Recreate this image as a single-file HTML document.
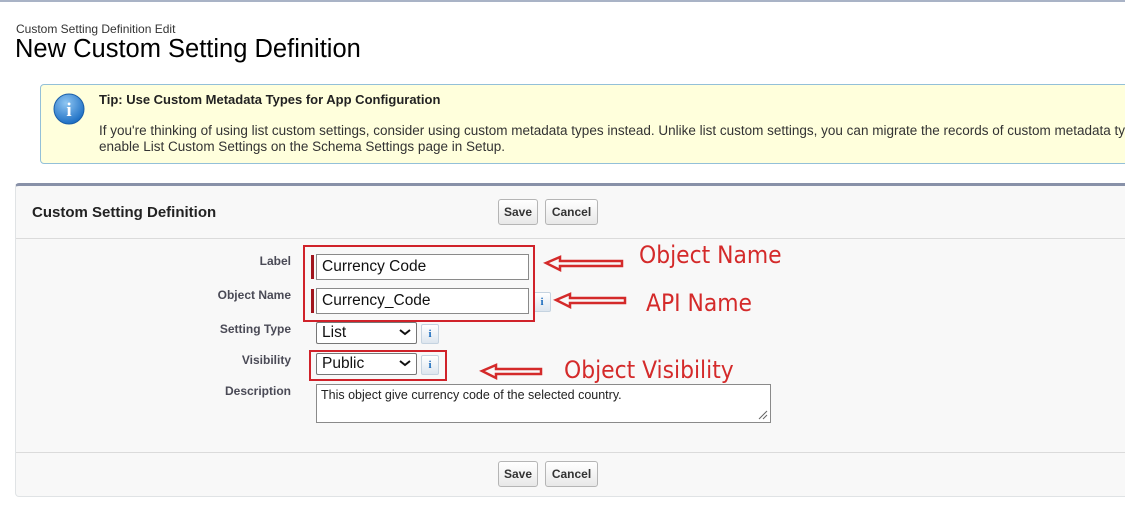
<!DOCTYPE html>
<html><head><style>
body{margin:0;width:1125px;height:511px;background:#fff;font-family:"Liberation Sans",Arial,sans-serif;position:relative;overflow:hidden}
.a{position:absolute}
.btn{position:absolute;height:24px;border:1px solid #b5b5b5;border-radius:3px;background:linear-gradient(#fff,#e8e8e8);font-size:12px;font-weight:bold;color:#333;line-height:24px;text-align:center}
.lbl{position:absolute;right:834px;font-size:12px;font-weight:bold;color:#4a4a56;text-align:right}
.inp{position:absolute;border:1px solid #8a8a8a;background:#fff;font-size:15.5px;color:#111;box-sizing:border-box;padding-left:5px}
.sel{position:absolute;border:1px solid #767676;border-radius:2px;background:#fff;font-size:15.5px;color:#111;box-sizing:border-box;padding-left:5px}
.info{position:absolute;width:16px;height:18px;border:1px solid #c5d3e0;border-radius:2px;background:linear-gradient(#fff,#dde6ef);color:#1a6bbd;font:bold 11px "Liberation Serif",serif;text-align:center;line-height:18px}
.red{position:absolute;border:2px solid #d0222a}
.ann{position:absolute;color:#d42a2a;font-size:24.3px;font-family:"DejaVu Sans Condensed","Liberation Sans",sans-serif}
</style></head><body>
<div class="a" style="left:0;top:0;width:1125px;height:2px;background:#a9b3c6"></div>
<div class="a" style="left:16px;top:22px;font-size:12px;color:#333">Custom Setting Definition Edit</div>
<div class="a" style="left:15px;top:35px;font-size:25.5px;color:#000">New Custom Setting Definition</div>
<div class="a" style="left:40px;top:84px;width:1100px;height:78px;background:#ffffdc;border:1px solid #93c0d8;border-radius:4px"></div>
<svg class="a" style="left:52px;top:92px" width="34" height="34"><defs><radialGradient id="g" cx="40%" cy="30%" r="70%"><stop offset="0" stop-color="#8fc6f2"/><stop offset="1" stop-color="#1d6fc4"/></radialGradient></defs><circle cx="17" cy="17" r="15" fill="url(#g)" stroke="#1a5ea8"/><text x="17" y="24" text-anchor="middle" fill="#fff" font-family="Liberation Serif" font-weight="bold" font-size="19">i</text></svg>
<div class="a" style="left:99px;top:92px;font-size:13px;font-weight:bold;color:#222">Tip: Use Custom Metadata Types for App Configuration</div>
<div class="a" style="left:99px;top:123px;font-size:13.5px;color:#333;line-height:16px;white-space:nowrap">If you're thinking of using list custom settings, consider using custom metadata types instead. Unlike list custom settings, you can migrate the records of custom metadata types<br>enable List Custom Settings on the Schema Settings page in Setup.</div>
<div class="a" style="left:15px;top:183px;width:1120px;height:310px;background:#f8f8f8;border:1px solid #e0e3e5;border-top:3px solid #8891a8;border-radius:4px 0 0 4px"></div>
<div class="a" style="left:16px;top:238px;width:1120px;height:1px;background:#dbdbdb"></div>
<div class="a" style="left:16px;top:452px;width:1120px;height:1px;background:#dbdbdb"></div>
<div class="a" style="left:32px;top:204px;font-size:15px;font-weight:bold;color:#222">Custom Setting Definition</div>
<div class="btn" style="left:498px;top:199px;width:38px">Save</div>
<div class="btn" style="left:545px;top:199px;width:51px">Cancel</div>
<div class="btn" style="left:498px;top:461px;width:38px">Save</div>
<div class="btn" style="left:545px;top:461px;width:51px">Cancel</div>
<div class="lbl" style="top:254px">Label</div>
<div class="lbl" style="top:288px">Object Name</div>
<div class="lbl" style="top:322px">Setting Type</div>
<div class="lbl" style="top:353px">Visibility</div>
<div class="lbl" style="top:384px">Description</div>
<div class="a" style="left:311px;top:255px;width:3px;height:24px;background:#a1151d"></div>
<div class="inp" style="left:316px;top:254px;width:213px;height:26px;line-height:24px">Currency Code</div>
<div class="a" style="left:311px;top:289px;width:3px;height:24px;background:#a1151d"></div>
<div class="inp" style="left:316px;top:288px;width:213px;height:26px;line-height:24px">Currency_Code</div>
<div class="info" style="left:533px;top:292px">i</div>
<div class="sel" style="left:316px;top:322px;width:101px;height:22px;line-height:20px">List</div>
<div class="info" style="left:421px;top:324px">i</div>
<div class="sel" style="left:316px;top:353px;width:101px;height:22px;line-height:20px">Public</div>
<div class="info" style="left:421px;top:355px">i</div>
<svg class="a" style="left:398px;top:327px" width="14" height="40"><path d="M2 3l5 4 5-4M2 34l5 4 5-4" stroke="#111" stroke-width="2" fill="none"/></svg>
<div class="a" style="left:316px;top:384px;width:455px;height:39px;border:1px solid #8a8a8a;background:#fff;box-sizing:border-box;padding:3px 4px;font-size:12.5px;color:#222">This object give currency code of the selected country.</div>
<svg class="a" style="left:758px;top:410px" width="10" height="10"><path d="M1 9L9 1M5 9L9 5" stroke="#666" stroke-width="1"/></svg>
<div class="red" style="left:303px;top:245px;width:228px;height:73px"></div>
<div class="red" style="left:309px;top:350px;width:134px;height:27px"></div>
<svg class="a" style="left:0;top:0" width="1125" height="511" fill="none" stroke="#d42a2a" stroke-width="2.5">
<path d="M546 263l14-6v4h62v5h-62v4z"/>
<path d="M556 300l14-6v4h55v5h-55v4z"/>
<path d="M482 371l14-6v4h45v5h-45v4z"/>
</svg>
<div class="ann" style="left:639px;top:240px">Object Name</div>
<div class="ann" style="left:646px;top:288px">API Name</div>
<div class="ann" style="left:564px;top:355px">Object Visibility</div>
</body></html>
